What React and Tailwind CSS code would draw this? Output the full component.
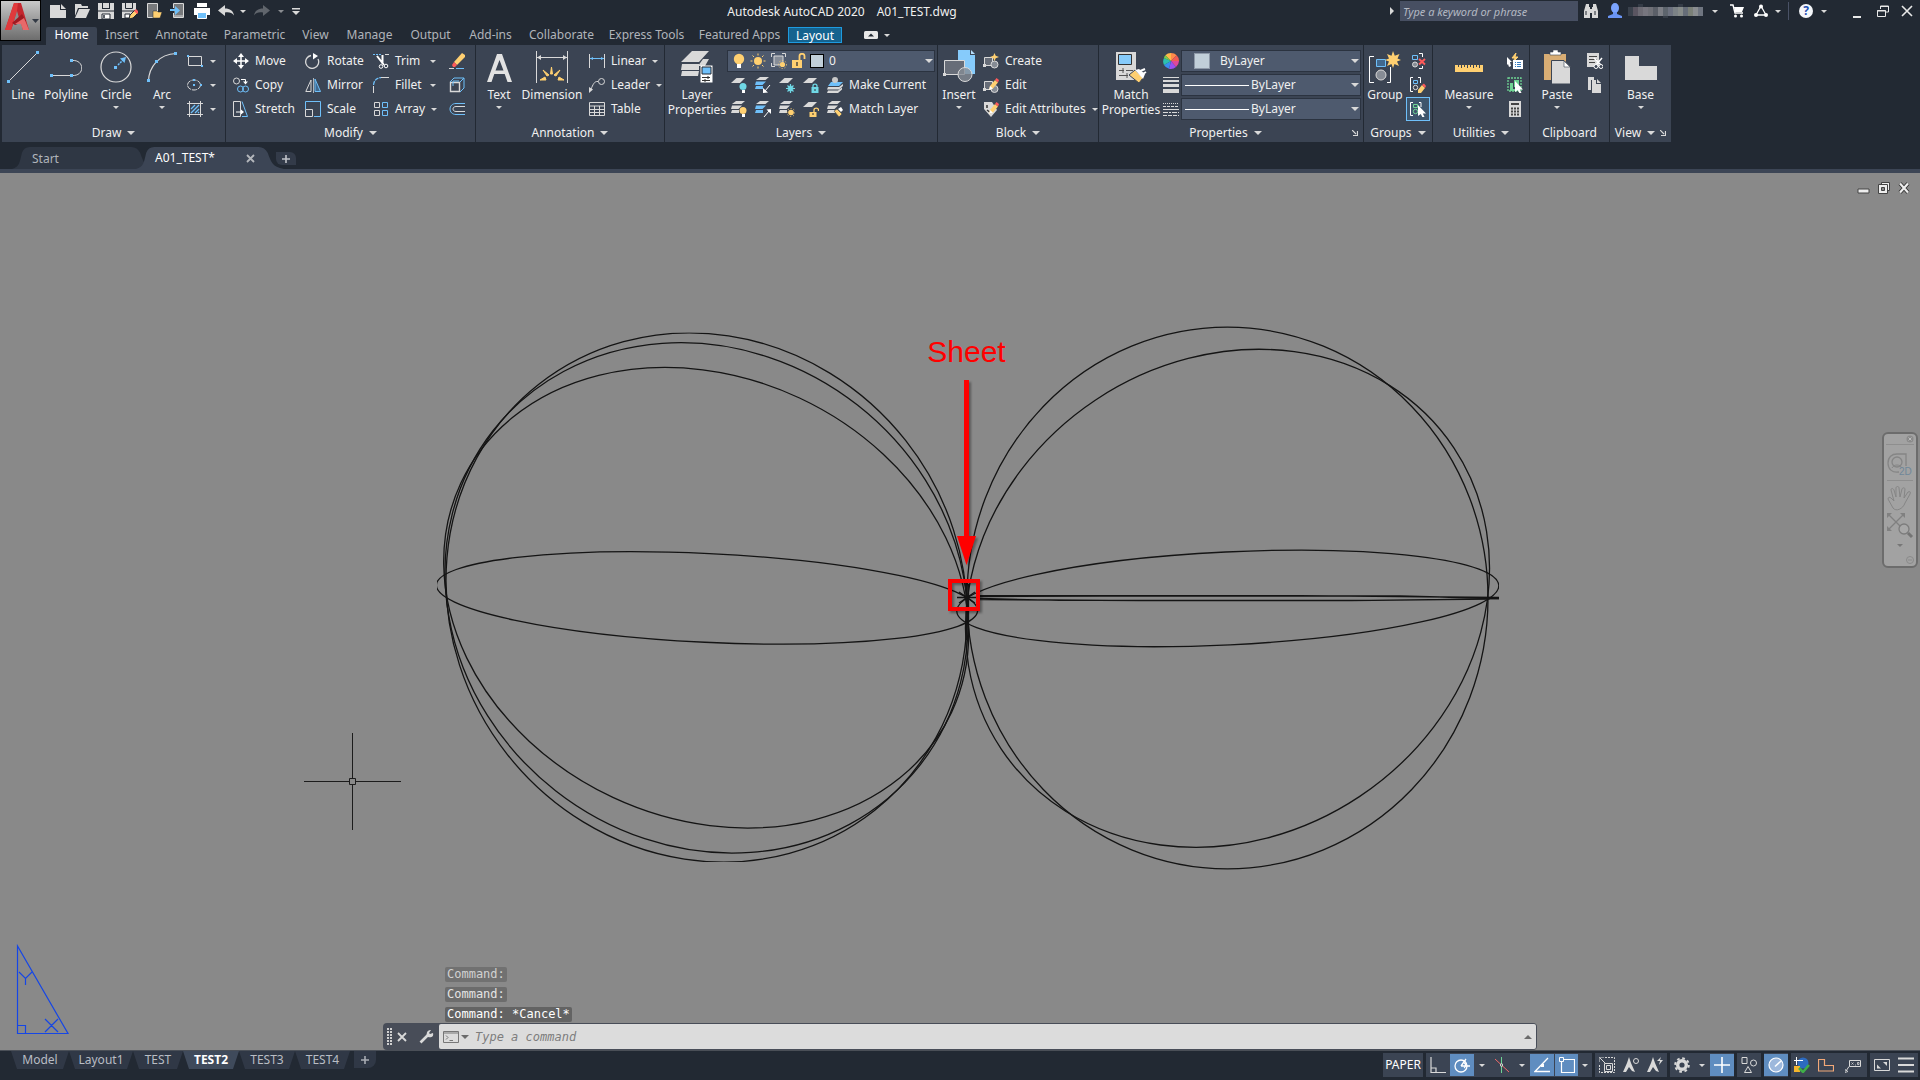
import React from "react";

const G = "#d9d9d9";
const B = "#6fc0fa";
const Y = "#ffd071";
const C = "#6fd8e6";
const GR = "#6fd494";

function Svg({ w = 16, h = 16, children }) {
    return (
        <svg
            width={w}
            height={h}
            viewBox={`0 0 ${w} ${h}`}
            fill="none"
            className="shrink-0"
            aria-hidden="true"
        >
            {children}
        </svg>
    );
}

function Caret({ big, color = G }) {
    return big ? (
        <Svg w={8} h={4}>
            <path d="M0 0h8L4 4z" fill={color} />
        </Svg>
    ) : (
        <Svg w={6} h={3}>
            <path d="M0 0h6L3 3z" fill={color} />
        </Svg>
    );
}

/* ---------- shared icon parts ---------- */
const Sheet1 = ({ y = 0, fill = G }) => (
    <path d={`M5.500 ${y}H14L9 ${y + 5}H0z`} fill={fill} />
);
const Pencil = () => (
    <g>
        <path d="M7 9l5-6 3 2.500-5 6-4 1.500z" fill={Y} />
        <path d="M12 3l1.500-2L16 3l-1 2.500z" fill="#ff5a5a" />
        <path d="M7 9l3 2.500-4 1.500z" fill="#fff" />
    </g>
);
const Cursor = () => (
    <path d="M0 0l8 8.500H4.800L6.500 12l-1.700 1-2-4L0 11z" fill="#fff" />
);
const Layers3 = ({ mid = G }) => (
    <g>
        <path d="M5 0h9l-3.500 3H1z" fill={G} />
        <path d="M1 4.500h10L7.500 8H0z" fill={mid} />
        <path d="M1 9h7v3H0z" fill={mid} />
    </g>
);

const icons = {
    /* quick access */
    qnew: (
        <Svg>
            <path d="M0 2h10v5h6v8H0z" fill={G} />
            <path d="M11 1l5 5h-5z" fill={G} />
        </Svg>
    ),
    qopen: (
        <Svg>
            <path d="M1 13V1h6l1 2h6v2H4z" fill={G} />
            <path d="M5 6h11l-4 9H1z" fill={G} />
        </Svg>
    ),
    qsave: (
        <Svg>
            <path d="M0 0h16v16H0z" fill={G} />
            <path d="M4 0h8v6H4z" fill="#222933" />
            <path d="M5 0h6v5H5z" fill={G} />
            <path d="M0 8h16" stroke="#222933" />
            <path d="M4 11h8v5H4z" fill="#fff" stroke="#222933" />
            <path d="M6 12v3" stroke="#222933" strokeWidth="1.500" />
        </Svg>
    ),
    qsaveas: (
        <Svg>
            <path d="M0 0h14v9l-6 6H0z" fill={G} />
            <path d="M3.500 0v5.500h7V0" stroke="#222933" />
            <path d="M0 8h14" stroke="#222933" />
            <path d="M3 11h5v4H3z" fill="#fff" stroke="#222933" />
            <path d="M8 12l5-5 3 3-5 5-4 1z" fill={Y} stroke="#222933" />
            <path d="M12 8l2-2 3 3-2 2z" fill="#ff5a5a" />
        </Svg>
    ),
    qweb: (
        <Svg>
            <path d="M1.500.5h10v14h-10z" fill="#77797c" stroke={G} />
            <path d="M7 15V8h4l1 1h4l-2 6z" fill={Y} stroke="#222933" strokeWidth=".5" />
        </Svg>
    ),
    qmobile: (
        <Svg>
            <path d="M4 0h9v15H4z" fill="#77797c" />
            <path d="M3.500 5V.5h10v14h-10V10M3 13h11" stroke={G} />
            <path d="M0 6h5V3l5 4.500L5 12V8H0z" fill={B} />
        </Svg>
    ),
    qprint: (
        <Svg>
            <path d="M3 0h10v4H3z" fill="#fff" />
            <path d="M0 5h16v7H0z" fill="#fff" />
            <path d="M3.500 9.500h9v6h-9z" fill={B} stroke="#fff" />
        </Svg>
    ),
    undo: (
        <Svg>
            <path d="M0 7.500L7 2v3.500c5 0 8 2 9 7-2-3-5-3.500-9-3V13z" fill={G} />
        </Svg>
    ),
    redo: (
        <Svg>
            <path d="M16 7.500L9 2v3.500c-5 0-8 2-9 7 2-3 5-3.500 9-3V13z" fill="#60656c" />
        </Svg>
    ),
    custom: (
        <Svg w={8} h={7}>
            <path d="M0 0h8v1.500H0zM0 3h8L4 7z" fill={G} />
        </Svg>
    ),
    /* draw */
    line: (
        <Svg w={32} h={32}>
            <path d="M2 30L30 2" stroke={G} />
            <path d="M0 29h3v3H0zM29 0h3v3h-3z" fill={B} />
        </Svg>
    ),
    polyline: (
        <Svg w={32} h={32}>
            <path d="M2 24.500h20M22 9.500c13-1 13 16 0 15" stroke={G} />
            <path d="M0 23h3v3H0zM20 23h3v3h-3zM20 8h3v3h-3z" fill={B} />
        </Svg>
    ),
    circle: (
        <Svg w={32} h={32}>
            <circle cx="16" cy="16" r="15" stroke={G} strokeWidth="1.200" />
            <path d="M18 14l5-5" stroke={B} strokeWidth="1.500" strokeDasharray="2 1" />
            <path d="M26 6l-1.500 6L20 7.500z" fill={B} />
            <path d="M14 15h3v3h-3z" fill={B} />
        </Svg>
    ),
    arc: (
        <Svg w={30} h={32}>
            <path d="M1.500 30C2 16 12 3 29 2.500" stroke={G} strokeWidth="1.200" />
            <path d="M0 28h3v3H0zM8 9h3v3H8zM27 1h3v3h-3z" fill={B} />
        </Svg>
    ),
    rect: (
        <Svg>
            <path d="M1.500 3.500h13v9h-13z" stroke={G} />
            <path d="M0 2h2v2H0zM14 12h2v2h-2z" fill={B} />
        </Svg>
    ),
    ellipse: (
        <Svg>
            <ellipse cx="7" cy="8" rx="6.500" ry="5" stroke={G} strokeDasharray="5 1" />
            <path d="M6 7h2v2H6zM6 2h2v2H6zM13 7h2v2h-2z" fill={B} />
        </Svg>
    ),
    hatch: (
        <Svg>
            <path d="M2.500 0v16M13.500 0v16M0 2.500h16M0 13.500h16" stroke={G} />
            <path d="M4 8l4-4M4 12l8-8M8 12l4-4M11 12l1-1" stroke={B} strokeWidth="1.300" />
        </Svg>
    ),
    /* modify */
    move: (
        <Svg>
            <path d="M8 2v12M2 8h12" stroke="#fff" strokeWidth="1.500" />
            <path d="M8 0l3 4H5zM8 16l3-4H5zM0 8l4-3v6zM16 8l-4-3v6z" fill="#fff" />
        </Svg>
    ),
    rotate: (
        <Svg>
            <path d="M6 2.500A6.500 6.500 0 1 0 13 6" stroke={G} strokeWidth="1.300" />
            <path d="M8 0l5 3-5 3.500z" fill="#fff" />
        </Svg>
    ),
    trim: (
        <Svg>
            <path d="M0 1.500h8" stroke={B} strokeDasharray="2 1" />
            <path d="M12 1.500h4" stroke={G} />
            <path d="M4 3l7 9M9.500 2v9" stroke="#fff" strokeWidth="2" />
            <circle cx="8" cy="13.500" r="1.800" stroke="#fff" />
            <circle cx="13" cy="13" r="1.800" stroke="#fff" />
        </Svg>
    ),
    eraser: (
        <Svg>
            <path d="M5 9l8-9 3 2v2L8 12z" fill={Y} />
            <path d="M5 9l3 3-2 2H4l-1-2z" fill="#ff5a5a" />
            <path d="M0 15.500h5" stroke={G} />
            <path d="M7 15.500h8" stroke={B} />
        </Svg>
    ),
    copy: (
        <Svg>
            <circle cx="3.500" cy="4" r="3" stroke={G} />
            <path d="M8 2.500h4.500V6" stroke="#fff" />
            <path d="M10 4.500h5l-2.500 3z" fill="#fff" />
            <circle cx="7.500" cy="12" r="3" stroke={B} />
            <circle cx="12.500" cy="12" r="3" stroke={B} />
        </Svg>
    ),
    mirror: (
        <Svg>
            <path d="M6 3v11.500H.8z" stroke={G} />
            <path d="M8.500 1v15" stroke="#fff" strokeWidth=".6" />
            <path d="M10 2l5.500 12.500H10z" fill="#41698f" stroke={B} />
        </Svg>
    ),
    fillet: (
        <Svg>
            <path d="M.5 16V9M8 .5h8" stroke={G} />
            <path d="M.5 8C1 3 4 .8 8 .5" stroke={B} strokeWidth="1.300" strokeDasharray="4 1" />
        </Svg>
    ),
    box3d: (
        <Svg>
            <path d="M1.500 5.500h9v9h-9z" stroke={G} strokeWidth="1.400" />
            <path d="M1 5l4-4h10v10l-4 4M11 5l4-4M4 9V4h6" stroke={B} />
        </Svg>
    ),
    stretch: (
        <Svg>
            <path d="M.5.500h7v15h-7z" stroke={G} />
            <path d="M9 .5l5.500 15H9" stroke={B} />
            <path d="M3 11h6" stroke="#fff" />
            <path d="M8 8.500l3 2.500-3 2.500z" fill="#fff" />
        </Svg>
    ),
    scale: (
        <Svg>
            <path d="M.5 8V.5h15v15H9" stroke={B} />
            <path d="M.5 8.500h7v7h-7z" stroke={G} />
        </Svg>
    ),
    array: (
        <Svg>
            <path d="M1.500 1.500h5v5h-5zM1.500 9.500h5v5h-5z" stroke={G} />
            <path d="M9.500 1.500h5v5h-5zM9.500 9.500h5v5h-5z" stroke={B} />
        </Svg>
    ),
    offset: (
        <Svg>
            <path d="M16 2.500H7c-8 0-8 11 0 11h9" stroke={B} />
            <path d="M16 5.500H7c-4 0-4 5 0 5h9" stroke={G} />
        </Svg>
    ),
    /* annotation */
    textA: (
        <Svg w={28} h={32}>
            <path d="M12 3h5l10 28h-4.500l-2.800-8H9.300l-2.800 8H2zm2.500 6L10.500 19.500h8z" fill="#e2e2e2" />
        </Svg>
    ),
    dimension: (
        <Svg w={32} h={32}>
            <path d="M.5 0v32M31.500 0v32M1 6.500h30" stroke={G} />
            <path d="M1 6.500L5 4v5zM31 6.500L27 4v5z" fill={G} />
            <path d="M14.500 23l1-7 1 7zM11 25l-4-6 6 5zM20 25l4-6-6 5zM10 29H4l5-3zM22 29h6l-5-3z" fill={Y} stroke={Y} />
        </Svg>
    ),
    linear: (
        <Svg>
            <path d="M.5 1v14M15.500 1v14" stroke={G} />
            <path d="M1 5.500h14" stroke={B} />
            <path d="M1 5.500L4 4v3zM15 5.500L12 4v3z" fill={B} />
        </Svg>
    ),
    leader: (
        <Svg>
            <circle cx="12.500" cy="4.500" r="3" stroke={G} />
            <path d="M9 4.500C5 4 4 8 2 12" stroke={G} />
            <path d="M0 16v-6l4 2.500z" fill={G} />
        </Svg>
    ),
    table: (
        <Svg>
            <path d="M.5 1.500h15v13H.5zM0 5h16M0 8.500h16M0 11.500h16M5.500 5v10M10.500 5v10" stroke={G} />
        </Svg>
    ),
    /* layers */
    layerProps: (
        <Svg w={32} h={32}>
            <path d="M11 0h17l-10 11H0zM22 8h6l-4 7h-7M1 13h17v6H0zM19 13h-4M1 20h17l-1 5H0z" fill={G} />
            <path d="M19.500 14.500h12v17h-12z" fill="#fff" />
            <path d="M21 16h9v7h-9z" fill={B} stroke="#222933" />
            <path d="M21 26.500h8M21 29.500h8M27 25v3M24 28v3" stroke="#333" />
        </Svg>
    ),
    bulb: (
        <Svg w={12} h={16}>
            <circle cx="6" cy="6" r="5.200" fill={Y} />
            <path d="M4 11h4v4H4z" fill="#fff" />
        </Svg>
    ),
    sun: (
        <Svg>
            <circle cx="8" cy="8" r="4" fill={Y} />
            <path d="M8 .5v2M8 13.500v2M.5 8h2M13.500 8h2M2.500 2.500L4 4M12 12l1.500 1.500M13.500 2.500L12 4M4 12l-1.500 1.500" stroke={Y} />
        </Svg>
    ),
    vpFreeze: (
        <Svg>
            <path d="M.5 4V.5H4M11 .5h3.500V4M.5 10v3.500H4" stroke={G} />
            <path d="M3 3h9v9H3z" fill="#868d98" stroke={G} />
            <circle cx="11.500" cy="11.500" r="2.600" fill={Y} />
            <circle cx="11.500" cy="11.500" r="4" stroke={Y} strokeDasharray="1 2" />
        </Svg>
    ),
    unlock: (
        <Svg w={14} h={16}>
            <path d="M7.500 8V3c0-3 5-3 5 0v3" stroke={Y} strokeWidth="1.800" />
            <path d="M0 7h10v8H0z" fill={Y} />
            <path d="M5 9v4" stroke="#333" strokeWidth="1.300" />
        </Svg>
    ),
    layOff: (
        <Svg>
            <Sheet1 y={1} />
            <circle cx="12" cy="9.500" r="3.500" fill={C} />
            <path d="M11 13h3v3h-3z" fill="#fff" />
        </Svg>
    ),
    layIso: (
        <Svg>
            <Layers3 mid={B} />
            <path d="M15 8l-5 6" stroke="#fff" />
            <path d="M8 16v-5l5 4.500z" fill="#fff" />
        </Svg>
    ),
    layFreeze: (
        <Svg>
            <Sheet1 y={1} />
            <path d="M11.500 7v9M7 11.500h9M8.500 8.500l6 6M14.500 8.500l-6 6" stroke={C} strokeWidth="1.200" />
            <circle cx="11.500" cy="11.500" r="2.500" stroke={C} />
        </Svg>
    ),
    layLock: (
        <Svg>
            <Sheet1 y={1} />
            <path d="M10 11V9c0-2.500 4-2.500 4 0v2" stroke={C} strokeWidth="1.300" />
            <path d="M8.500 10h7v6h-7z" fill={C} />
            <path d="M12 12v2" stroke="#333" />
        </Svg>
    ),
    makeCur: (
        <Svg>
            <path d="M4 5h12l-4 4H1z" fill={B} />
            <path d="M1 10h11l4-3v2l-4 3.500H0zM1 13.500h10l4-3v2L11 16H0z" fill={G} />
            <circle cx="8" cy="3" r="3" fill="#c8c8c8" />
        </Svg>
    ),
    layOn: (
        <Svg>
            <Layers3 />
            <circle cx="12" cy="9.500" r="3.500" fill={Y} />
            <path d="M11 13h3v3h-3z" fill="#fff" />
        </Svg>
    ),
    layUniso: (
        <Svg>
            <Layers3 mid={B} />
            <path d="M9 16l5-6" stroke="#fff" />
            <path d="M16 8v5l-4.500-4.500z" fill="#fff" />
        </Svg>
    ),
    layThaw: (
        <Svg>
            <Layers3 />
            <circle cx="12" cy="11.500" r="2.800" fill={Y} />
            <circle cx="12" cy="11.500" r="4" stroke={Y} strokeDasharray="1 2" />
        </Svg>
    ),
    layUnlock: (
        <Svg>
            <Sheet1 y={1} />
            <path d="M11 11V9c0-2.500 4.500-2.500 4.500 0v1" stroke={Y} strokeWidth="1.300" />
            <path d="M6.500 11h7v5h-7z" fill={Y} />
            <path d="M10 12v2" stroke="#333" />
        </Svg>
    ),
    matchLay: (
        <Svg>
            <Layers3 />
            <path d="M7 10l3-2 5 5-3 3z" fill={Y} stroke="#3b4453" strokeWidth=".6" />
            <path d="M11 8l3-2 2 3-2 2z" fill="#fff" />
        </Svg>
    ),
    /* block */
    insert: (
        <Svg w={32} h={34}>
            <path d="M15 0h12v5h5v19H15z" fill="#86cbfb" />
            <path d="M28 0l4 4h-4z" fill="#b5defc" />
            <path d="M1.500 10.500h20v14h-20z" fill="#676d78" stroke={G} />
            <circle cx="22" cy="24.500" r="7" fill="#868c95" fillOpacity=".8" stroke={G} />
            <path d="M0 23h3v3H0z" fill={G} />
        </Svg>
    ),
    create: (
        <Svg>
            <path d="M1.500 4.500h8v8h-8z" fill="#676d78" stroke={G} />
            <circle cx="11.500" cy="11.500" r="3.500" fill="#868c95" stroke={G} />
            <path d="M0 11h3v3H0z" fill={G} />
            <path d="M11.500 0l1.200 2.800L16 4l-3.300 1.200L11.500 8l-1.200-2.800L7 4l3.300-1.200z" fill={Y} />
        </Svg>
    ),
    edit: (
        <Svg>
            <path d="M1.500 4.500h8v8h-8z" fill="#676d78" stroke={G} />
            <circle cx="11.500" cy="12" r="3.500" fill="#868c95" stroke={G} />
            <path d="M0 11h3v3H0z" fill={G} />
            <Pencil />
        </Svg>
    ),
    editAttr: (
        <Svg>
            <path d="M1 1h8l5 8-6 7-7-8z" fill={G} />
            <path d="M4 4v3M4 9l4 3" stroke="#333" strokeWidth="1.500" />
            <Pencil />
        </Svg>
    ),
    /* properties */
    matchProps: (
        <Svg w={32} h={34}>
            <path d="M1 2h20v28H1z" fill={G} />
            <path d="M3.500 4.500h13v10h-13z" fill="#86cbfb" stroke="#333" />
            <path d="M4 20.500h5M11 20.500h7M4 25.500h9M8 18v5M12 23v5" stroke="#555" />
            <path d="M14 25l6-5 8 8-4 5z" fill={Y} stroke="#3b4453" />
            <path d="M20 20l4-1 6 5-2 5z" fill="#fff" />
            <path d="M23 22l7-3M26 25l5-3" stroke="#fff" strokeWidth="2" />
        </Svg>
    ),
    wheel: (
        <Svg>
            <path d="M8 8L2.300 2.300A8 8 0 0 1 8 0z" fill="#ffb84a" />
            <path d="M8 8V0a8 8 0 0 1 5.700 2.300z" fill="#ff8a4a" />
            <path d="M8 8l5.700-5.700A8 8 0 0 1 16 8z" fill="#f25c54" />
            <path d="M8 8h8a8 8 0 0 1-3 6z" fill="#e0489a" />
            <path d="M8 8l5 6a8 8 0 0 1-7 1.700z" fill="#9a4ff0" />
            <path d="M8 8l-2 7.700A8 8 0 0 1 1 12z" fill="#3a8df0" />
            <path d="M8 8l-7 4a8 8 0 0 1 0-7z" fill="#2cc0b0" />
            <path d="M8 8L1 5a8 8 0 0 1 1.300-2.700z" fill="#7ccf4a" />
        </Svg>
    ),
    weights: (
        <Svg>
            <path d="M0 0h16v1H0zM0 3h16v2H0zM0 7h16v3H0zM0 12h16v4H0z" fill={G} />
        </Svg>
    ),
    ltypes: (
        <Svg>
            <path d="M0 2.500h16" stroke={G} strokeDasharray="1 1" />
            <path d="M0 5.500h16" stroke={G} strokeDasharray="3 1" />
            <path d="M0 8.500h16" stroke={G} />
            <path d="M0 11.500h16" stroke={G} strokeDasharray="5 1 2 1" />
            <path d="M0 14.500h16" stroke={G} strokeDasharray="4 1" />
        </Svg>
    ),
    /* groups */
    group: (
        <Svg w={32} h={34}>
            <path d="M5 6.500H.5v26H5M18 32.500h3.500V17" stroke="#fff" />
            <path d="M7.500 9.500h9v7h-9z" fill="#41698f" stroke={B} />
            <circle cx="12" cy="25" r="5" fill="#868c95" stroke={G} />
            <path d="M24 1l1.800 4.700L30.500 4l-2 4.500L32 10l-4 1.500 2 4.500-4.500-2L24 18l-1.500-4-4.500 2 2-4.500L16 10l4-1.500L18 4l4.500 1.700z" fill={Y} />
        </Svg>
    ),
    ungroup: (
        <Svg>
            <path d="M2.500 2.500h5v4h-5z" stroke={B} />
            <circle cx="5" cy="11.500" r="2.500" fill="#868c95" stroke={G} />
            <path d="M9 .5h3.500V4M12.500 13v2.500H9" stroke="#fff" />
            <path d="M9 6l6 5.500M15 6l-6 5.500" stroke="#ff5a5a" strokeWidth="2" />
        </Svg>
    ),
    groupEdit: (
        <Svg>
            <path d="M3 .5H.5v14H3M8 .5h2.500V6" stroke="#fff" />
            <path d="M3.500 3.500h4v3h-4z" stroke={B} />
            <circle cx="5.500" cy="10.500" r="2.200" stroke={G} />
            <path d="M8 13l4-5 3 3-4 5H8z" fill={Y} />
            <path d="M12 8l2-1.500L16 9l-1 2z" fill="#ff5a5a" />
        </Svg>
    ),
    groupSel: (
        <Svg>
            <path d="M3 1.500H.5v13H3M9 1.500h2V6" stroke="#fff" />
            <path d="M3.500 3.500h4v3h-4z" stroke={GR} />
            <circle cx="5.500" cy="10.500" r="2.200" stroke={GR} />
            <g transform="translate(8 4)">
                <Cursor />
            </g>
        </Svg>
    ),
    /* utilities */
    measure: (
        <Svg w={28} h={34}>
            <path d="M0 15h28v7H0z" fill={Y} />
            <path d="M3.500 15v2M6.500 15v3M9.500 15v2M12.500 15v3M15.500 15v2M18.500 15v3M21.500 15v2M24.500 15v3" stroke="#3b4453" />
        </Svg>
    ),
    quickSel: (
        <Svg>
            <path d="M9 0L5 5h3L6 9l5-5H8z" fill={Y} stroke={Y} />
            <path d="M0 4l5 5H3l1 4-2 1-1-3-1 1z" fill="#fff" />
            <path d="M6 7h10v9H6z" fill="#fff" />
            <path d="M8 9.500h1M8 11.500h1M8 13.500h1M10 9.500h4M10 11.500h4M10 13.500h4" stroke="#3a7fc0" />
        </Svg>
    ),
    selAll: (
        <Svg>
            <path d="M1 1h13v13H1z" stroke={GR} strokeDasharray="2 1" strokeWidth="1.300" />
            <path d="M3 6h3v6h6v2H3zM7 3h5v7H7z" fill={GR} />
            <g transform="translate(8 4)">
                <Cursor />
            </g>
        </Svg>
    ),
    calc: (
        <Svg>
            <path d="M2 0h12v16H2z" fill={G} />
            <path d="M4 2h8v2H4z" fill="#444" />
            <path d="M4 7.500h8M4 10.500h8M4 13.500h8" stroke="#444" strokeWidth="2" strokeDasharray="2 1" />
        </Svg>
    ),
    /* clipboard, view */
    paste: (
        <Svg w={28} h={34}>
            <path d="M1 4h22v26H1z" fill="#d8ad74" />
            <path d="M7 5V2h3V0h5v2h3v3z" fill="#fff" stroke="#3b4453" strokeWidth=".6" />
            <path d="M8.500 10.500H21l6.500 6.500v17h-19z" fill={G} stroke="#3b4453" />
            <path d="M21 11l6 6h-6z" fill="#fff" stroke="#3b4453" strokeWidth=".6" />
        </Svg>
    ),
    cut: (
        <Svg>
            <path d="M0 0h12v14H0z" fill={G} />
            <path d="M2 3.500h8M2 6.500h8M2 9.500h6" stroke="#444" />
            <path d="M7 5l7 7M15 5l-6 7" stroke="#fff" strokeWidth="1.500" />
            <circle cx="9" cy="13.500" r="2" fill="#3b4453" stroke="#fff" />
            <circle cx="14" cy="13.500" r="2" fill="#3b4453" stroke="#fff" />
        </Svg>
    ),
    copyClip: (
        <Svg>
            <path d="M1 0h6v3H4v10H1z" fill={G} />
            <path d="M5 3h4v4h5v9H5zM10 2l4 4h-4z" fill={G} />
        </Svg>
    ),
    base: (
        <Svg w={32} h={34}>
            <path d="M0 6h14v10h18v14H0z" fill={G} />
        </Svg>
    ),
};

function BigButton({ icon, lines, caret, className }) {
    return (
        <button className={`flex flex-col items-center pt-[6px] ${className}`}>
            <span className="flex h-8 items-center justify-center">{icon}</span>
            <span className="mt-1 flex flex-col leading-[15px]">
                {lines.map((l) => (
                    <span key={l}>{l}</span>
                ))}
            </span>
            {caret && (
                <span className="mt-1">
                    <Caret />
                </span>
            )}
        </button>
    );
}

function SmallButton({ icon, label, title, caret, caretClass = "ml-auto" }) {
    return (
        <button
            className="flex h-6 items-center gap-[6px] whitespace-nowrap"
            aria-label={label ? undefined : title}
        >
            {icons[icon]}
            {label && <span>{label}</span>}
            {caret && (
                <span className={caretClass}>
                    <Caret />
                </span>
            )}
        </button>
    );
}

function Panel({ title, className, caret = true, launcher, children }) {
    return (
        <section className={`flex h-[97px] shrink-0 flex-col bg-[#3b4453] ${className}`}>
            <div className="flex h-[79px]">{children}</div>
            <div className="flex h-[18px] items-center">
                <button className="flex flex-1 items-center justify-center gap-[6px] leading-4">
                    {title}
                    {caret && <Caret big />}
                </button>
                {launcher && (
                    <button className="w-[11px]" aria-label={`${title} dialog`}>
                        <Svg w={6} h={6}>
                            <path d="M0 0l4 4M5.500 1v4.500H1" stroke={G} strokeWidth="1.200" />
                        </Svg>
                    </button>
                )}
            </div>
        </section>
    );
}

function PropertySelect({ label, children, className = "" }) {
    return (
        <label
            className={`flex h-[22px] items-center border border-[#2b3340] bg-[#4e5a6e] pr-[1px] ${className}`}
        >
            {children}
            <select
                aria-label={label}
                className="min-w-0 flex-1 appearance-none bg-transparent leading-4 outline-none"
            >
                <option>ByLayer</option>
            </select>
            <Caret big />
        </label>
    );
}

function Ribbon() {
    return (
        <div className="flex gap-px overflow-hidden bg-[#222933] pl-[2px] text-[12px] text-[#f0f0f0]">
            <Panel title="Draw" className="w-[223px]">
                <BigButton className="w-[42px]" icon={icons.line} lines={["Line"]} />
                <BigButton className="w-[44px]" icon={icons.polyline} lines={["Polyline"]} />
                <BigButton className="w-[56px]" icon={icons.circle} lines={["Circle"]} caret />
                <BigButton className="w-[36px]" icon={icons.arc} lines={["Arc"]} caret />
                <div className="flex w-[36px] flex-col pt-1 pl-[7px]">
                    <SmallButton icon="rect" title="Rectangle" caret />
                    <SmallButton icon="ellipse" title="Ellipse" caret />
                    <SmallButton icon="hatch" title="Hatch" caret />
                </div>
            </Panel>

            <Panel title="Modify" className="w-[249px]">
                <div className="grid auto-rows-[24px] grid-cols-[72px_68px_63px_13px_16px] pt-1 pl-[7px]">
                    <SmallButton icon="move" label="Move" />
                    <SmallButton icon="rotate" label="Rotate" />
                    <SmallButton icon="trim" label="Trim" caret />
                    <span />
                    <SmallButton icon="eraser" title="Erase" />
                    <SmallButton icon="copy" label="Copy" />
                    <SmallButton icon="mirror" label="Mirror" />
                    <SmallButton icon="fillet" label="Fillet" caret />
                    <span />
                    <SmallButton icon="box3d" title="Explode" />
                    <SmallButton icon="stretch" label="Stretch" />
                    <SmallButton icon="scale" label="Scale" />
                    <SmallButton icon="array" label="Array" caret />
                    <span />
                    <SmallButton icon="offset" title="Offset" />
                </div>
            </Panel>

            <Panel title="Annotation" className="w-[188px]">
                <BigButton className="w-[46px]" icon={icons.textA} lines={["Text"]} caret />
                <BigButton className="w-[60px]" icon={icons.dimension} lines={["Dimension"]} />
                <div className="flex w-[76px] flex-col pt-1 pl-[7px]">
                    <SmallButton icon="linear" label="Linear" caret />
                    <SmallButton icon="leader" label="Leader" caret />
                    <SmallButton icon="table" label="Table" />
                </div>
            </Panel>

            <Panel title="Layers" className="w-[272px]">
                <BigButton
                    className="w-[62px] pl-[2px]"
                    icon={icons.layerProps}
                    lines={["Layer", "Properties"]}
                />
                <div className="flex w-[208px] flex-col pt-[5px]">
                    <label className="mb-px flex h-[22px] items-center border border-[#2b3340] bg-[#4e5a6e] pr-[1px] pl-[5px]">
                        <span className="flex items-center gap-[5px]">
                            {icons.bulb}
                            {icons.sun}
                            {icons.vpFreeze}
                            {icons.unlock}
                        </span>
                        <span className="mr-[5px] ml-[4px] size-[14px] border border-black bg-[#c1cfd9]" />
                        <select
                            aria-label="Layer"
                            className="min-w-0 flex-1 appearance-none bg-transparent leading-4 outline-none"
                        >
                            <option>0</option>
                        </select>
                        <Caret big />
                    </label>
                    <div className="flex gap-2 pl-1">
                        <SmallButton icon="layOff" title="Off" />
                        <SmallButton icon="layIso" title="Isolate" />
                        <SmallButton icon="layFreeze" title="Freeze" />
                        <SmallButton icon="layLock" title="Lock" />
                        <SmallButton icon="makeCur" label="Make Current" />
                    </div>
                    <div className="flex gap-2 pl-1">
                        <SmallButton icon="layOn" title="Turn all on" />
                        <SmallButton icon="layUniso" title="Unisolate" />
                        <SmallButton icon="layThaw" title="Thaw all" />
                        <SmallButton icon="layUnlock" title="Unlock" />
                        <SmallButton icon="matchLay" label="Match Layer" />
                    </div>
                </div>
            </Panel>

            <Panel title="Block" className="w-[160px]">
                <BigButton className="w-[42px]" icon={icons.insert} lines={["Insert"]} caret />
                <div className="flex w-[113px] flex-col pt-1 pl-[3px]">
                    <SmallButton icon="create" label="Create" />
                    <SmallButton icon="edit" label="Edit" />
                    <SmallButton icon="editAttr" label="Edit Attributes" caret />
                </div>
            </Panel>

            <Panel title="Properties" className="w-[264px]" launcher>
                <BigButton
                    className="w-[64px]"
                    icon={icons.matchProps}
                    lines={["Match", "Properties"]}
                />
                <div className="grid auto-rows-[22px] grid-cols-[16px_180px] items-center gap-[2px] pt-[5px]">
                    {icons.wheel}
                    <PropertySelect label="Object color">
                        <span className="mr-[10px] ml-3 size-4 border border-[#8e99a8] bg-[#c1cfd9]" />
                    </PropertySelect>
                    {icons.weights}
                    <PropertySelect label="Lineweight">
                        <span className="mr-[2px] ml-[3px] h-px w-16 bg-white" />
                    </PropertySelect>
                    {icons.ltypes}
                    <PropertySelect label="Linetype">
                        <span className="mr-[2px] ml-[3px] h-px w-16 bg-white" />
                    </PropertySelect>
                </div>
            </Panel>

            <Panel title="Groups" className="w-[68px]">
                <BigButton className="w-[42px]" icon={icons.group} lines={["Group"]} />
                <div className="flex w-6 flex-col items-center pt-1">
                    <SmallButton icon="ungroup" title="Ungroup" />
                    <SmallButton icon="groupEdit" title="Group edit" />
                    <span className="flex h-6 w-6 items-center justify-center border border-[#6fc0fa] bg-[#3e556c]">
                        <SmallButton icon="groupSel" title="Group selection" />
                    </span>
                </div>
            </Panel>

            <Panel title="Utilities" className="w-[96px]">
                <BigButton className="w-[72px]" icon={icons.measure} lines={["Measure"]} caret />
                <div className="flex flex-col pt-1 pl-[2px]">
                    <SmallButton icon="quickSel" title="Quick select" />
                    <SmallButton icon="selAll" title="Select all" />
                    <SmallButton icon="calc" title="Quick calculator" />
                </div>
            </Panel>

            <Panel title="Clipboard" className="w-[79px]" caret={false}>
                <BigButton className="w-[54px]" icon={icons.paste} lines={["Paste"]} caret />
                <div className="flex flex-col pt-1 pl-[3px]">
                    <SmallButton icon="cut" title="Cut" />
                    <SmallButton icon="copyClip" title="Copy clip" />
                </div>
            </Panel>

            <Panel title="View" className="w-[61px]" launcher>
                <BigButton className="w-[61px]" icon={icons.base} lines={["Base"]} caret />
            </Panel>
        </div>
    );
}

/* signed-in user name, pixelated */
const mosaic = [
    "#3a414c", "#5a5561", "#6d6b74", "#77767f", "#6f7077", "#5b5f68", "#7d7f86", "#5d646d",
    "#6d7280", "#7c8286", "#878c8a", "#666d78", "#7b8078", "#8a8d90", "#6f7580",
];

function TitleBar() {
    return (
        <div className="flex h-[27px] items-start">
            <div className="flex h-[22px] items-center gap-2 pl-[9px]">
                {[
                    ["qnew", "New"],
                    ["qopen", "Open"],
                    ["qsave", "Save"],
                    ["qsaveas", "Save as"],
                    ["qweb", "Open from web"],
                    ["qmobile", "Save to web"],
                    ["qprint", "Plot"],
                    ["undo", "Undo"],
                ].map(([k, t]) => (
                    <button key={k} aria-label={t}>
                        {icons[k]}
                    </button>
                ))}
                <span className="-ml-[2px]">
                    <Caret />
                </span>
                <button aria-label="Redo">{icons.redo}</button>
                <Caret color="#8a8d92" />
                <button aria-label="Customize">{icons.custom}</button>
            </div>
            <h1 className="flex flex-1 justify-center gap-3 pt-1 text-[12px] leading-4 whitespace-nowrap text-[#f0f0f0]">
                <span>Autodesk AutoCAD 2020</span>
                <span>A01_TEST.dwg</span>
            </h1>
            <div className="flex h-[22px] items-center">
                <span className="flex w-4 justify-center">
                    <Svg w={4} h={8}>
                        <path d="M0 0v8l4-4z" fill={G} />
                    </Svg>
                </span>
                <input
                    type="text"
                    aria-label="Search"
                    placeholder="Type a keyword or phrase"
                    className="h-5 w-[178px] bg-[#474f62] px-[3px] text-[11px] italic outline-none placeholder:text-[#b4b9c2]"
                />
                <button className="flex w-[26px] justify-center" aria-label="Find">
                    <Svg w={14}>
                        <path d="M2 1h3v3h1v11H0V8zM9 1h3l2 7v7H8V4h1zM6 6h2v4H6z" fill={G} />
                        <path d="M2 8v4M11 8v4" stroke="#222933" />
                    </Svg>
                </button>
                <button className="flex w-[22px] justify-center" aria-label="Account">
                    <Svg w={14}>
                        <ellipse cx="7" cy="5" rx="4" ry="5" fill="#7ba4ff" />
                        <path d="M5 9h4v2l5 2v2H0v-2l5-2z" fill="#6a94f4" />
                    </Svg>
                </button>
                <span className="flex w-[78px] justify-center">
                    <Svg w={75} h={14}>
                        {mosaic.map((c, i) => (
                            <rect key={i} x={i * 5} y="3" width="5" height="9" fill={c} />
                        ))}
                        <path d="M10 0h5v3h-5zM50 0h5v3h-5zM35 12h5v2h-5z" fill="#343b46" />
                    </Svg>
                </span>
                <span className="flex w-[22px] justify-center">
                    <Caret />
                </span>
                <button className="flex w-[22px] justify-center" aria-label="App store">
                    <Svg w={14} h={14}>
                        <path d="M0 1h3l2 8h8" stroke="#fff" strokeWidth="1.400" />
                        <path d="M4 3h10l-2 5H5z" fill="#fff" />
                        <circle cx="5.500" cy="12" r="1.500" fill="#fff" />
                        <circle cx="11.500" cy="12" r="1.500" fill="#fff" />
                    </Svg>
                </button>
                <button className="flex w-[26px] justify-center" aria-label="Autodesk app">
                    <Svg w={14} h={14}>
                        <path d="M7 2L2 11h10z" stroke="#fff" strokeWidth="1.300" />
                        <circle cx="7" cy="2.500" r="2" fill="#fff" />
                        <circle cx="2" cy="11" r="2" fill="#fff" />
                        <circle cx="12" cy="11" r="2" fill="#fff" />
                    </Svg>
                </button>
                <span className="flex w-2 justify-center">
                    <Caret />
                </span>
                <span className="mx-[6px] h-[18px] w-px bg-[#4a5266]" />
                <button className="flex w-[22px] justify-center" aria-label="Help">
                    <span className="size-[14px] rounded-full bg-[#f4f6fa] text-[12px] leading-[14px] font-bold text-[#1f4fb0]">
                        ?
                    </span>
                </button>
                <span className="mr-3 flex w-[13px] justify-center">
                    <Caret />
                </span>
                <button className="flex h-full w-[30px] items-end justify-center pb-1" aria-label="Minimize">
                    <span className="h-[2px] w-2 bg-[#e8e8e8]" />
                </button>
                <button className="flex w-[22px] justify-center" aria-label="Restore">
                    <Svg w={12} h={12}>
                        <path d="M3.500 4V1h8v6H8.500M3 1.500h9" stroke="#e8e8e8" />
                        <path d="M.5 5.500h8v6h-8zM0 6h9" stroke="#e8e8e8" />
                    </Svg>
                </button>
                <button className="flex w-[26px] justify-center" aria-label="Close">
                    <Svg w={12} h={12}>
                        <path d="M1 1l10 10M11 1L1 11" stroke="#e8e8e8" strokeWidth="1.600" />
                    </Svg>
                </button>
            </div>
        </div>
    );
}

const menuTabs = [
    ["Home", "w-[51px] rounded-t-xs bg-[#3b4453] text-white"],
    ["Insert", "w-[50px]"],
    ["Annotate", "w-[69px]"],
    ["Parametric", "w-[77px]"],
    ["View", "w-[45px]"],
    ["Manage", "w-[63px]"],
    ["Output", "w-[59px]"],
    ["Add-ins", "w-[61px]"],
    ["Collaborate", "w-[81px]"],
    ["Express Tools", "w-[89px]"],
    ["Featured Apps", "w-[97px]"],
    ["Layout", "mb-[2px] w-[54px] border border-[#1e9be0] bg-[#15638f] text-white"],
];

function Header() {
    return (
        <header className="flex bg-[#222933]">
            <button
                aria-label="Application menu"
                className="flex size-[41px] shrink-0 items-start border border-black bg-linear-to-b from-[#c9c9c9] to-[#6d6d6d] pt-[2px] pl-1"
            >
                <Svg w={34} h={28}>
                    <path d="M0 27L9 0h7l8 27h-6l-2-7-7-1-3 8z" fill="#c4262e" />
                    <path d="M9 0h4l-1 8L6 27H0z" fill="#e03a3c" />
                    <path d="M12 8l-3 10 6 .5z" fill="#8f8f8f" />
                    <path d="M7 20l10-9 4 7-11 4z" fill="#a01a22" />
                    <path d="M10 21l9-6 5 12h-6l-2-6z" fill="#e8696a" />
                    <path d="M27 16h7l-3.500 4z" fill="#333a45" />
                </Svg>
            </button>
            <div className="min-w-0 flex-1">
                <TitleBar />
                <nav className="flex h-[18px] pl-[5px] text-[12px] text-[#b0b4ba]">
                    {menuTabs.map(([name, cls]) => (
                        <button
                            key={name}
                            className={`flex shrink-0 items-start justify-center leading-4 whitespace-nowrap ${cls}`}
                        >
                            {name}
                        </button>
                    ))}
                    <button
                        className="ml-[22px] flex items-center gap-[6px] pb-[2px]"
                        aria-label="Ribbon display"
                    >
                        <Svg w={14} h={8}>
                            <rect width="14" height="8" rx="1.500" fill="#e8e8e8" />
                            <path d="M4 5.500L7 2.500l3 3z" fill="#222933" />
                        </Svg>
                        <Caret />
                    </button>
                </nav>
            </div>
        </header>
    );
}

function TabShape({ fill }) {
    return (
        <svg
            className="absolute inset-0 h-full w-full"
            viewBox="0 0 146 22"
            preserveAspectRatio="none"
            aria-hidden="true"
        >
            <path
                d="M0 22C8 20 8 14 10 6Q12 0 18 0H121Q127 0 130 6C133 14 134 20 146 22z"
                fill={fill}
            />
        </svg>
    );
}

function FileTabs() {
    return (
        <div className="flex h-[31px] items-end border-b-4 border-[#3c4555] bg-[#222933] pl-3 text-[12px]">
            <button className="relative h-[22px] w-[144px] text-left leading-6 text-[#b0b4ba]">
                <TabShape fill="#2f3744" />
                <span className="relative pl-5">Start</span>
            </button>
            <div className="relative -ml-[20px] flex h-[22px] w-[148px] items-center leading-6 text-white">
                <TabShape fill="#3c4555" />
                <button className="relative pl-[19px]">A01_TEST*</button>
                <button className="relative mr-[29px] ml-auto" aria-label="Close tab">
                    <Svg w={9} h={9}>
                        <path d="M1 1l7 7M8 1L1 8" stroke="#b4b7bc" strokeWidth="1.800" />
                    </Svg>
                </button>
            </div>
            <button
                className="mb-1 -ml-[8px] flex h-[13px] w-5 items-center justify-center rounded-tr-md rounded-bl-md bg-[#333b49]"
                aria-label="New drawing"
            >
                <Svg w={8} h={8}>
                    <path d="M4 0v8M0 4h8" stroke="#c0c3c8" strokeWidth="1.600" />
                </Svg>
            </button>
        </div>
    );
}

/* Ellipse from its bounding half sizes (hw, hh) and how far the
   bottom-most point leans to the right of the centre */
function Loop({ cx, cy, hw, hh, lean }) {
    const b = lean * hh;
    const a = hw * hw;
    const d = hh * hh;
    const r = Math.sqrt(((a - d) / 2) ** 2 + b * b);
    const deg = (Math.atan2(2 * b, a - d) / 2) * (180 / Math.PI);
    return (
        <ellipse
            rx={Math.sqrt((a + d) / 2 + r)}
            ry={Math.sqrt((a + d) / 2 - r)}
            transform={`translate(${cx} ${cy}) rotate(${deg})`}
        />
    );
}

const loops = [
    { cx: 706.5, cy: 597.5, hw: 260.5, hh: 264.6, lean: 17 },
    { cx: 706.5, cy: 597.9, hw: 261.5, hh: 255.2, lean: 25.8 },
    { cx: 706.2, cy: 597.7, hw: 262.5, hh: 230.3, lean: 41.2 },
    { cx: 707, cy: 597.9, hw: 270.6, hh: 46.2, lean: 74 },
    { cx: 1227.5, cy: 598, hw: 260.5, hh: 270.8, lean: 0 },
    { cx: 1227.5, cy: 598.3, hw: 262, hh: 249, lean: -31.8 },
    { cx: 1227.8, cy: 598.4, hw: 271, hh: 48.2, lean: -71.5 },
];

function Drawing() {
    return (
        <svg
            className="absolute inset-0 h-full w-full"
            viewBox="0 173 1920 877"
            fill="none"
            role="img"
            aria-label="Drawing"
        >
            <clipPath id="limits">
                <path d="M437 332.500h520V326h542v544H957v-8H437z" />
            </clipPath>
            <g stroke="#141414" strokeWidth="1.300" clipPath="url(#limits)">
                {loops.map((l, i) => (
                    <Loop key={i} {...l} />
                ))}
            </g>
            <g stroke="#141414" strokeWidth="1.300">
                <path d="M980 595.700H1300L1499 597.500M980 596.500L1100 596 1400 596 1499 598.500" />
                <path d="M980 598.500L1060 600.400H1400L1499 598.500M980 599.500L1140 600.700H1350L1490 599" />
                <path d="M957 597.500h22M959 592l16 11M975 592l-16 11M966.500 580v60M968.500 584v50" />
            </g>
            {/* cursor */}
            <path d="M304 781.500h45M356 781.500h45M352.500 733v45M352.500 785v45M349.500 778.500h6v6h-6z" stroke="#1c1c1c" />
            {/* ucs */}
            <path
                d="M17.500 946v87.500H68zM17.500 1025.500h8v8M19 972l6.500 6.500L32 972M25.500 978.500v6.500M45 1019l13 13M58 1019l-13 13"
                stroke="#1546e6"
                strokeWidth="1.200"
            />
            {/* callout */}
            <g className="drop-shadow-[2px_2px_1px_rgba(0,0,0,0.35)]">
                <path d="M964 380h5v156h7l-9.500 29L957 536h7z" fill="#f00" />
                <path d="M950 581h28v28h-28z" stroke="#f00" strokeWidth="4" />
            </g>
            <text
                x="966.500"
                y="362"
                textAnchor="middle"
                fill="#f00"
                className="font-['Liberation_Sans',sans-serif] text-[30px]"
            >
                Sheet
            </text>
        </svg>
    );
}

function NavBar() {
    return (
        <div className="absolute top-[259px] right-[2px] flex h-[136px] w-9 flex-col items-center rounded-md border-2 border-[#6c6c6c] bg-[#a2a2a2]">
            <Svg w={32} h={132}>
                <circle cx="26" cy="5" r="3.500" fill="#8a8a8a" />
                <path d="M24.500 3.500l3 3M27.500 3.500l-3 3" stroke="#bbb" />
                <path d="M2 10.500h28M3 46.500h26" stroke="#8e8e8e" />
                <path d="M15 38C8 39 4 35 4 29c0-6 4-9 9-9h9v12" stroke="#858585" strokeWidth="1.300" />
                <circle cx="13" cy="28" r="5" stroke="#858585" strokeWidth="1.300" />
                <path d="M8 34c2-4 8-4 10 0" stroke="#858585" />
                <path
                    d="M9 74l-5-9c0-2 2-2 3-1l3 3-3-11c0-2 2-2 3 0l2 7V54c0-2 3-2 3 0l1 9 2-8c1-2 3-1 3 0l-1 9 4-6c2-1 3 0 2 2l-5 9c-2 6-9 9-12 5z"
                    stroke="#858585"
                />
                <path d="M5 81l14 14M19 81L5 95" stroke="#808080" strokeWidth="1.300" />
                <path d="M3 79h5l-5 5zM21 79h-5l5 5zM3 97h5l-5-5z" fill="#808080" />
                <circle cx="20" cy="95" r="5" fill="#a8a8a8" stroke="#7c7c7c" strokeWidth="1.300" />
                <path d="M24 99l4 4" stroke="#747474" strokeWidth="3" />
                <path d="M13 110h6l-3 3z" fill="#777" />
                <circle cx="26" cy="126" r="3.500" stroke="#8a8a8a" />
                <path d="M24 126h4" stroke="#8a8a8a" />
                <text x="15" y="41" fill="#6f8799" className="font-['Liberation_Sans',sans-serif] text-[10px]">
                    2D
                </text>
            </Svg>
        </div>
    );
}

function CommandLine() {
    return (
        <div className="absolute bottom-0 left-[383px] w-[calc(60%+2px)] font-['DejaVu_Sans_Mono',monospace] text-[12px]">
            <ul className="mb-px flex flex-col items-start gap-[5px] pl-[62px] leading-[15px]">
                <li className="rounded-xs bg-[#717171] px-[2px] text-[#d2d2d2]">Command:</li>
                <li className="rounded-xs bg-[#6c6c6c] px-[2px] text-[#e4e4e4]">Command:</li>
                <li className="rounded-xs bg-[#636363] px-[2px] text-white">Command: *Cancel*</li>
            </ul>
            <div className="flex h-[27px] rounded-sm bg-[#484d58] p-px">
                <div className="flex w-[55px] items-center pl-[3px]">
                    <Svg w={5} h={17}>
                        <path d="M1 0v17M4 0v17" stroke="#d0d0d0" strokeWidth="2" strokeDasharray="2 1" />
                    </Svg>
                    <button className="ml-[5px]" aria-label="Close command line">
                        <Svg w={10} h={10}>
                            <path d="M1 1l8 8M9 1L1 9" stroke={G} strokeWidth="1.800" />
                        </Svg>
                    </button>
                    <button className="ml-3" aria-label="Command settings">
                        <Svg w={15} h={15}>
                            <path d="M1.500 13.500L9 6" stroke={G} strokeWidth="2.600" />
                            <path d="M8 7c-1-4 1-6 4-6l-2 3 1 1 3-1c1 4-2 5-5 4z" fill={G} />
                        </Svg>
                    </button>
                </div>
                <div className="flex flex-1 items-center rounded-xs bg-[#dcdcdc] pr-1 pl-1">
                    <button className="flex items-center gap-[2px]" aria-label="Recent commands">
                        <Svg w={16} h={12}>
                            <path d="M.5.500h15v11H.5zM0 2h16" stroke="#777" />
                            <path d="M3 4.500l2 2-2 2M6.500 9.500H10" stroke="#777" />
                        </Svg>
                        <Caret big color="#6b6b6b" />
                    </button>
                    <input
                        type="text"
                        aria-label="Command"
                        placeholder="Type a command"
                        className="ml-[6px] min-w-0 flex-1 bg-transparent italic outline-none placeholder:text-[#7d7d7d]"
                    />
                    <Svg w={8} h={4}>
                        <path d="M0 4h8L4 0z" fill="#6b6b6b" />
                    </Svg>
                </div>
            </div>
        </div>
    );
}

const layoutTabs = [
    ["Model", "w-[58px]"],
    ["Layout1", "w-[64px]"],
    ["TEST", "w-[50px]"],
    ["TEST2", "w-[56px]"],
    ["TEST3", "w-[56px]"],
    ["TEST4", "w-[55px]"],
];

function StatusButton({ title, on, className = "w-6", children }) {
    return (
        <button
            aria-label={title}
            className={`flex h-[22px] items-center justify-center ${className} ${on ? "bg-[#5f8dc0]" : ""}`}
        >
            {children}
        </button>
    );
}

function StatusGroup({ children, className = "" }) {
    return <div className={`flex h-6 items-center bg-[#3b4453] ${className}`}>{children}</div>;
}

function StatusBar() {
    return (
        <footer className="flex h-[29px] items-start justify-between bg-[#222933] text-[12px]">
            <div className="flex pl-[11px]">
                {layoutTabs.map(([name, w]) => (
                    <button
                        key={name}
                        className={`h-[18px] leading-[18px] [clip-path:polygon(0_0,100%_0,calc(100%-6px)_100%,6px_100%)] ${w} ${
                            name === "TEST2"
                                ? "bg-[#3f4a5b] font-bold text-white"
                                : "bg-[#303846] text-[#b9bdc4]"
                        }`}
                    >
                        {name}
                    </button>
                ))}
                <button
                    className="ml-[4px] flex h-[17px] w-[22px] items-center justify-center rounded-br-lg bg-[#303846]"
                    aria-label="New layout"
                >
                    <Svg w={8} h={8}>
                        <path d="M4 0v8M0 4h8" stroke="#a8acb3" strokeWidth="1.600" />
                    </Svg>
                </button>
            </div>

            <div className="flex gap-[3px] pt-[2px] pr-[2px]">
                <StatusGroup>
                    <button className="w-10 text-center text-white">PAPER</button>
                </StatusGroup>
                <StatusGroup>
                    <StatusButton title="Ortho">
                        <Svg>
                            <path d="M1 0v15.500h15M1 11h5v4" stroke={G} strokeWidth="1.200" />
                        </Svg>
                    </StatusButton>
                    <StatusButton title="Polar" on>
                        <Svg>
                            <circle cx="7" cy="9" r="6" stroke="#fff" strokeWidth="1.300" />
                            <path d="M7 9h9M7 9l5-7M10 6c2 0 2 4 0 5" stroke="#fff" strokeWidth="1.300" />
                        </Svg>
                    </StatusButton>
                    <StatusButton title="Polar options" className="w-4">
                        <Caret />
                    </StatusButton>
                    <StatusButton title="Isoplane">
                        <Svg>
                            <path d="M1 2l14 13" stroke="#f06a6a" />
                            <path d="M7.500 0v16" stroke={GR} />
                            <path d="M6.500 7h2v2h-2z" fill="#222" stroke="#fff" strokeWidth=".7" />
                        </Svg>
                    </StatusButton>
                    <StatusButton title="Isoplane options" className="w-4">
                        <Caret />
                    </StatusButton>
                    <StatusButton title="Tracking" on>
                        <Svg>
                            <path d="M14 1L1 14.500h15" stroke="#fff" strokeWidth="1.300" />
                            <path d="M7 7h3v3H7z" fill="#fff" />
                        </Svg>
                    </StatusButton>
                    <span className="w-px" />
                    <StatusButton title="Object snap" on className="w-[23px]">
                        <Svg>
                            <path d="M2.500 5v10.500h13v-13H5" stroke="#fff" strokeWidth="1.200" />
                            <path d="M.5.500h4v4h-4z" stroke="#fff" />
                        </Svg>
                    </StatusButton>
                    <StatusButton title="Snap options" className="w-[14px]">
                        <Caret />
                    </StatusButton>
                </StatusGroup>
                <StatusGroup>
                    <StatusButton title="Cycling">
                        <Svg>
                            <path d="M6 .5h9.500V15.500H.5V7" stroke={G} strokeDasharray="2 1" />
                            <path d="M7.500 8.500h4v4h-4zM5.500 6.500h8v8h-8z" stroke={G} />
                            <path d="M1 1l5 5M0 5V0h5" stroke={G} />
                        </Svg>
                    </StatusButton>
                    <StatusButton title="Annotation visibility">
                        <Svg>
                            <path d="M6 0l2 6 4 9-3-1-3-4-3 5H0l4-9z" fill={G} />
                            <circle cx="13" cy="4" r="2.500" stroke={G} />
                        </Svg>
                    </StatusButton>
                    <StatusButton title="Auto scale">
                        <Svg>
                            <path d="M6 0l2 6 4 9-3-1-3-4-3 5H0l4-9z" fill={G} />
                            <path d="M14 0l-4 4h3l-1 4 4-5h-3z" fill={G} />
                        </Svg>
                    </StatusButton>
                </StatusGroup>
                <StatusGroup>
                    <StatusButton title="Workspace">
                        <Svg>
                            <circle cx="8" cy="8" r="4.300" stroke={G} strokeWidth="3.400" />
                            <circle cx="8" cy="8" r="6.800" stroke={G} strokeWidth="2" strokeDasharray="2.700 2.640" />
                        </Svg>
                    </StatusButton>
                    <StatusButton title="Workspace options" className="w-4">
                        <Caret />
                    </StatusButton>
                    <StatusButton title="Annotation monitor" on>
                        <Svg>
                            <path d="M8 0v16M0 8h16" stroke="#fff" strokeWidth="1.600" />
                        </Svg>
                    </StatusButton>
                </StatusGroup>
                <StatusGroup>
                    <StatusButton title="Isolate">
                        <Svg>
                            <path d="M1 .5h5v6H1zM7 9.500l3.500 6h-7z" stroke={G} />
                            <circle cx="12.500" cy="6" r="3" stroke={G} />
                        </Svg>
                    </StatusButton>
                </StatusGroup>
                <StatusGroup>
                    <StatusButton title="Graphics performance" on>
                        <Svg>
                            <circle cx="8" cy="8" r="7" fill="#9db8dc" stroke="#fff" strokeWidth="1.200" />
                            <path d="M7 9.500L13 4" stroke="#fff" strokeWidth="1.600" />
                        </Svg>
                    </StatusButton>
                </StatusGroup>
                <StatusGroup>
                    <StatusButton title="Hardware acceleration" className="w-[22px]">
                        <Svg>
                            <circle cx="9" cy="6" r="5.500" fill="#2d6bc0" />
                            <path d="M2.500 0v8M0 3.500h9" stroke="#fff" />
                            <path d="M0 9h6v6H0z" fill="#f5b52c" />
                            <path d="M5 11l4 4 6-7" stroke="#3fae49" strokeWidth="2.500" />
                        </Svg>
                    </StatusButton>
                    <StatusButton title="Clean view" className="w-[26px]">
                        <Svg>
                            <path d="M.5 2.500h6v6h9v5.500H.5z" stroke="#f2a878" strokeWidth="1.200" />
                        </Svg>
                    </StatusButton>
                    <StatusButton title="Coordinates" className="w-7">
                        <Svg>
                            <path d="M4.500 3.500h11v6h-11zM4 9.500L1 14" stroke={G} />
                            <path d="M0 15.500v-3l3 2zM6.500 5.500l2 2M8.500 5.500l-2 2M10 8h1M12.500 5.500h1.500v2h-1.500z" stroke={G} strokeWidth=".8" />
                        </Svg>
                    </StatusButton>
                </StatusGroup>
                <StatusGroup>
                    <StatusButton title="Full screen">
                        <Svg>
                            <path d="M.5 2.500h15v11H.5z" stroke={G} />
                            <path d="M9 5h4v4zM7 11.500H3v-4z" fill={G} />
                        </Svg>
                    </StatusButton>
                    <StatusButton title="Customization">
                        <Svg>
                            <path d="M0 1.500h16M0 8h16M0 14.500h16" stroke={G} strokeWidth="1.800" />
                        </Svg>
                    </StatusButton>
                </StatusGroup>
            </div>
        </footer>
    );
}

export default function App() {
    return (
        <div className="flex min-h-screen flex-col bg-[#222933] font-['Noto_Sans',sans-serif]">
            <Header />
            <Ribbon />
            <FileTabs />
            <main className="relative flex-1 overflow-hidden border-b border-[#4a4f57] bg-[#898989]">
                <Drawing />
                <div className="absolute top-[9px] right-[10px] flex items-center gap-2">
                    <button aria-label="Minimize drawing">
                        <Svg w={13} h={12}>
                            <path d="M1 7h11v4H1z" fill="#eee" stroke="#444" />
                        </Svg>
                    </button>
                    <button aria-label="Restore drawing">
                        <Svg w={12} h={12}>
                            <path d="M3.500.5h8v8h-8z" fill="#eee" stroke="#444" />
                            <path d="M.5 2.500h9v9h-9z" fill="#eee" stroke="#444" />
                            <path d="M3.500 5.500h3v3h-3z" fill="#888" stroke="#444" />
                        </Svg>
                    </button>
                    <button aria-label="Close drawing">
                        <Svg w={12} h={12}>
                            <path d="M2 1.500l8 9M10 1.500l-8 9" stroke="#333" strokeWidth="4" />
                            <path d="M2 1.500l8 9M10 1.500l-8 9" stroke="#eee" strokeWidth="2.200" />
                        </Svg>
                    </button>
                </div>
                <NavBar />
                <CommandLine />
            </main>
            <StatusBar />
        </div>
    );
}
